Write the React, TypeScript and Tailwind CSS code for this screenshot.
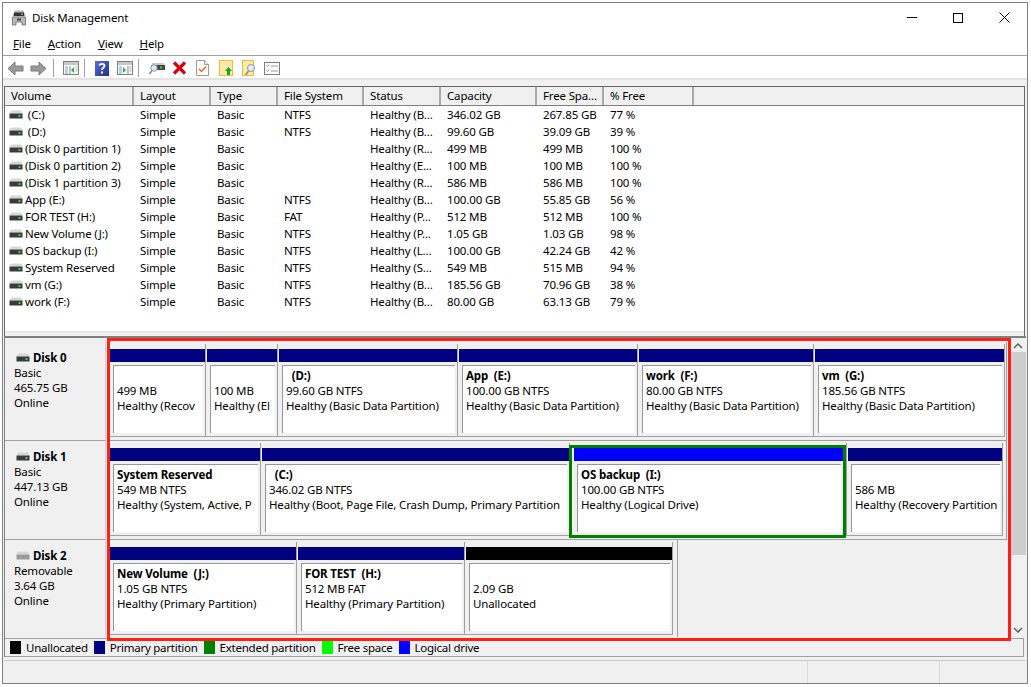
import React from "react";

const font = { fontFamily: '"Noto Sans", "Open Sans", sans-serif' };

const rows = [
  [" (C:)", "Simple", "Basic", "NTFS", "Healthy (B...", "346.02 GB", "267.85 GB", "77 %"],
  [" (D:)", "Simple", "Basic", "NTFS", "Healthy (B...", "99.60 GB", "39.09 GB", "39 %"],
  ["(Disk 0 partition 1)", "Simple", "Basic", "", "Healthy (R...", "499 MB", "499 MB", "100 %"],
  ["(Disk 0 partition 2)", "Simple", "Basic", "", "Healthy (E...", "100 MB", "100 MB", "100 %"],
  ["(Disk 1 partition 3)", "Simple", "Basic", "", "Healthy (R...", "586 MB", "586 MB", "100 %"],
  ["App (E:)", "Simple", "Basic", "NTFS", "Healthy (B...", "100.00 GB", "55.85 GB", "56 %"],
  ["FOR TEST (H:)", "Simple", "Basic", "FAT", "Healthy (P...", "512 MB", "512 MB", "100 %"],
  ["New Volume (J:)", "Simple", "Basic", "NTFS", "Healthy (P...", "1.05 GB", "1.03 GB", "98 %"],
  ["OS backup (I:)", "Simple", "Basic", "NTFS", "Healthy (L...", "100.00 GB", "42.24 GB", "42 %"],
  ["System Reserved", "Simple", "Basic", "NTFS", "Healthy (S...", "549 MB", "515 MB", "94 %"],
  ["vm (G:)", "Simple", "Basic", "NTFS", "Healthy (B...", "185.56 GB", "70.96 GB", "38 %"],
  ["work (F:)", "Simple", "Basic", "NTFS", "Healthy (B...", "80.00 GB", "63.13 GB", "79 %"],
];
const cols = [
  ["Volume", 129],
  ["Layout", 77],
  ["Type", 67],
  ["File System", 86],
  ["Status", 77],
  ["Capacity", 96],
  ["Free Spa...", 67],
  ["% Free", 90],
] as const;

type Part = { w: number; name?: string; l1: string; l2?: string; bar?: string; sel?: boolean };
const disks: { name: string; info: string[]; icon: string; w: number; h: number; parts: Part[] }[] = [
  {
    name: "Disk 0",
    info: ["Basic", "465.75 GB", "Online"],
    icon: "#3a3a3a",
    w: 899,
    h: 99,
    parts: [
      { w: 97, l1: "499 MB", l2: "Healthy (Recov" },
      { w: 72, l1: "100 MB", l2: "Healthy (El" },
      { w: 180, name: "\u00a0 (D:)", l1: "99.60 GB NTFS", l2: "Healthy (Basic Data Partition)" },
      { w: 180, name: "App  (E:)", l1: "100.00 GB NTFS", l2: "Healthy (Basic Data Partition)" },
      { w: 176, name: "work  (F:)", l1: "80.00 GB NTFS", l2: "Healthy (Basic Data Partition)" },
      { w: 191, name: "vm  (G:)", l1: "185.56 GB NTFS", l2: "Healthy (Basic Data Partition)" },
    ],
  },
  {
    name: "Disk 1",
    info: ["Basic", "447.13 GB", "Online"],
    icon: "#3a3a3a",
    w: 899,
    h: 99,
    parts: [
      { w: 152, name: "System Reserved", l1: "549 MB NTFS", l2: "Healthy (System, Active, P" },
      { w: 309, name: "\u00a0 (C:)", l1: "346.02 GB NTFS", l2: "Healthy (Boot, Page File, Crash Dump, Primary Partition" },
      { w: 277, name: "OS backup  (I:)", l1: "100.00 GB NTFS", l2: "Healthy (Logical Drive)", bar: "bg-[#0000ff]", sel: true },
      { w: 156, l1: "586 MB", l2: "Healthy (Recovery Partition" },
    ],
  },
  {
    name: "Disk 2",
    info: ["Removable", "3.64 GB", "Online"],
    icon: "#9a9a9a",
    w: 570,
    h: 97,
    parts: [
      { w: 188, name: "New Volume  (J:)", l1: "1.05 GB NTFS", l2: "Healthy (Primary Partition)" },
      { w: 168, name: "FOR TEST  (H:)", l1: "512 MB FAT", l2: "Healthy (Primary Partition)" },
      { w: 208, l1: "2.09 GB", l2: "Unallocated", bar: "bg-black" },
    ],
  },
];

const legend = [
  ["Unallocated", "bg-black"],
  ["Primary partition", "bg-[#000080]"],
  ["Extended partition", "bg-[#008000]"],
  ["Free space", "bg-[#00ff00]"],
  ["Logical drive", "bg-[#0000ff]"],
];

function DiskIcon({ color = "#3a3a3a", light = false }: { color?: string; light?: boolean }) {
  return (
    <svg width="14" height="9" viewBox="0 0 14 9" className="shrink-0">
      <path d="M2 0.5h10l1.5 3h-13z" fill="#d6d6d6" />
      <rect x="0.5" y="3.5" width="13" height="5" fill={color} />
      {!light && <rect x="9.5" y="5" width="2" height="2" fill="#35d24a" />}
    </svg>
  );
}

function TitleIcon() {
  return (
    <svg width="16" height="16" viewBox="0 0 16 16">
      <path d="M4 1h8l2 5H2z" fill="#c9c9c9" stroke="#777" strokeWidth="0.5" />
      <rect x="3" y="2.5" width="10" height="3.5" fill="#333" />
      <rect x="10" y="3.5" width="2" height="1.5" fill="#3fd24f" />
      <path d="M1.5 7h13v8h-3.5v-3h-6v3h-3.5z" fill="#b9b9b9" stroke="#6a6a6a" strokeWidth="0.8" />
      <rect x="6" y="8.5" width="4" height="2" fill="#444" />
    </svg>
  );
}

const ArrowL = () => (
  <svg width="17" height="15" viewBox="0 0 17 15">
    <path d="M8 1 1 7.5 8 14v-4h8V5H8z" fill="#9a9a9a" stroke="#7b7b7b" />
  </svg>
);
const ArrowR = () => (
  <svg width="17" height="15" viewBox="0 0 17 15">
    <path d="M9 1l7 6.5L9 14v-4H1V5h8z" fill="#9a9a9a" stroke="#7b7b7b" />
  </svg>
);
const PanelL = () => (
  <svg width="16" height="14" viewBox="0 0 16 14">
    <rect x="0.5" y="0.5" width="15" height="13" fill="#fff" stroke="#808080" />
    <rect x="1" y="1" width="14" height="3" fill="#c8c8c8" />
    <path d="M2 6h3M2 8h3M2 10h3M2 12h3" stroke="#7a9cc2" />
    <path d="M7 5v8" stroke="#888" />
    <path d="M11 6v6L8 9z" fill="#26b04a" />
    <path d="M12.5 6h2M12.5 8h2M12.5 10h2" stroke="#aaa" />
  </svg>
);
const PanelR = () => (
  <svg width="16" height="14" viewBox="0 0 16 14">
    <rect x="0.5" y="0.5" width="15" height="13" fill="#fff" stroke="#808080" />
    <rect x="1" y="1" width="14" height="3" fill="#c8c8c8" />
    <path d="M2 6h3M2 8h3M2 10h3M2 12h3" stroke="#7a9cc2" />
    <path d="M6 6v6l3-3z" fill="#26b04a" />
    <path d="M11 5v8" stroke="#888" />
    <path d="M12.5 6h2M12.5 8h2M12.5 10h2" stroke="#aaa" />
  </svg>
);
const HelpIcon = () => (
  <svg width="14" height="15" viewBox="0 0 14 15">
    <defs>
      <linearGradient id="hg" x1="0" y1="0" x2="1" y2="1">
        <stop offset="0" stopColor="#5a70d8" />
        <stop offset="1" stopColor="#1c2f8a" />
      </linearGradient>
    </defs>
    <rect width="14" height="15" fill="url(#hg)" />
    <path d="M4.5 4.5C4.5 2.5 9.5 2.3 9.5 4.8c0 2-2.5 2-2.5 4.2" fill="none" stroke="#fff" strokeWidth="1.8" />
    <rect x="6" y="10.5" width="2" height="2" fill="#fff" />
  </svg>
);
const DiskSearch = () => (
  <svg width="16" height="14" viewBox="0 0 16 14">
    <path d="M3 2h12l1 3H3z" fill="#c9c9c9" />
    <rect x="2" y="4" width="14" height="5" fill="#444" />
    <rect x="11" y="5.5" width="2" height="2" fill="#3fd24f" />
    <circle cx="5" cy="7" r="3.2" fill="#dfeaf2" stroke="#8a9aa8" />
    <path d="M3 9.5 0.5 13" stroke="#8d8d8d" strokeWidth="1.6" />
  </svg>
);
const XIcon = () => (
  <svg width="15" height="14" viewBox="0 0 15 14">
    <path d="M2 1.5 13 12.5M13 1.5 2 12.5" stroke="#d8000c" strokeWidth="3.2" />
  </svg>
);
const DocCheck = () => (
  <svg width="13" height="16" viewBox="0 0 13 16">
    <path d="M0.5 0.5h8l4 4v11h-12z" fill="#fff" stroke="#9a9a9a" />
    <path d="M8.5 0.5v4h4" fill="#eee" stroke="#9a9a9a" />
    <path d="M3 9l2.5 2.5L10 6.5" fill="none" stroke="#e9662c" strokeWidth="1.4" />
  </svg>
);
const FolderUp = () => (
  <svg width="14" height="16" viewBox="0 0 14 16">
    <rect x="0.5" y="0.5" width="13" height="15" fill="#fde8a6" stroke="#e6bf3e" />
    <path d="M9.5 7l3.5 4h-2v4H8v-4H6z" fill="#14a52b" />
  </svg>
);
const FolderFind = () => (
  <svg width="14" height="16" viewBox="0 0 14 16">
    <rect x="0.5" y="0.5" width="11" height="15" fill="#fde8a6" stroke="#e6bf3e" />
    <circle cx="9" cy="8" r="3.5" fill="#e2edf5" stroke="#8296a8" />
    <path d="M6.5 11 3.5 15" stroke="#8d8d8d" strokeWidth="1.6" />
  </svg>
);
const ListIcon = () => (
  <svg width="16" height="13" viewBox="0 0 16 13">
    <rect x="0.5" y="0.5" width="15" height="12" fill="#fff" stroke="#7d7d7d" />
    <path d="M2.5 3.5l1 1 1.5-2M2.5 8.5l1 1 1.5-2" fill="none" stroke="#5b93cf" />
    <path d="M7 4h7M7 9h7" stroke="#9a9a9a" />
  </svg>
);

function Tool({ children, gap = "" }: { children: React.ReactNode; gap?: string }) {
  return <div className={`w-[23px] h-[22px] flex items-center justify-center ${gap}`}>{children}</div>;
}
const Sep = ({ gap = "ml-[2px]" }: { gap?: string }) => <div className={`w-px h-[18px] bg-[#a0a0a0] ${gap}`} />;

function Partition({ p }: { p: Part }) {
  return (
    <div
      style={{ width: p.w }}
      className={`relative shrink-0 h-[93px] flex flex-col pt-[5px] border-r border-b border-[#a0a0a0] ${p.sel ? "pl-[4px]" : "pl-[1px]"}`}
    >
      <div className={`h-[13px] shrink-0 ${p.sel ? "mr-[3px]" : ""} ${p.bar ?? "bg-[#000080]"}`} />
      <div className={`mt-[3px] ml-[3px] h-[68px] bg-white border-l border-t border-[#969696] pl-[3px] pr-[3px] pt-[2px] overflow-hidden whitespace-nowrap leading-[15px] ${p.sel ? "mr-[5px]" : "mr-[2px]"}`}>
        <div className="h-[15px] font-bold whitespace-pre">{p.name ?? ""}</div>
        <div className="h-[15px]">{p.l1}</div>
        <div className="h-[15px] overflow-hidden">{p.l2}</div>
      </div>
      {p.sel && <div className="absolute -left-px right-0 top-[2px] h-[93px] border-[3px] border-[#008000]" />}
    </div>
  );
}

export default function App() {
  return (
    <div style={font} className="w-[1031px] h-[687px] bg-white pt-[2px] pl-[2px] text-[11.5px] tracking-[-0.15px] text-black overflow-hidden">
      <div className="w-[1026px] h-[682px] border border-[#808080] bg-[#f0f0f0] flex flex-col">
        {/* title bar */}
        <div className="h-[29px] shrink-0 bg-white flex items-center pl-[8px]">
          <TitleIcon />
          <span className="ml-[5px]">Disk Management</span>
          <div className="ml-auto flex items-center">
            <div className="w-[46px] flex justify-center">
              <div className="w-[10px] h-px bg-black" />
            </div>
            <div className="w-[46px] flex justify-center">
              <div className="w-[10px] h-[10px] border border-black" />
            </div>
            <div className="w-[46px] flex justify-center">
              <svg width="11" height="11" viewBox="0 0 11 11">
                <path d="M0.5 0.5l10 10M10.5 0.5l-10 10" stroke="#000" />
              </svg>
            </div>
          </div>
        </div>
        {/* menu */}
        <div className="h-[24px] shrink-0 bg-white border-b border-[#a0a0a0] flex items-center pl-[10px] gap-[17px]">
          <span><u>F</u>ile</span>
          <span><u>A</u>ction</span>
          <span><u>V</u>iew</span>
          <span><u>H</u>elp</span>
        </div>
        {/* toolbar */}
        <div className="h-[24px] pt-[2px] shrink-0 bg-white flex items-center pl-[1px] border-b-2 border-[#e3e3e3]">
          <Tool><ArrowL /></Tool>
          <Tool><ArrowR /></Tool>
          <Sep gap="ml-[3px]" />
          <Tool gap="ml-[5px]"><PanelL /></Tool>
          <Sep />
          <Tool gap="ml-[5px]"><HelpIcon /></Tool>
          <Tool><PanelR /></Tool>
          <Sep />
          <Tool gap="ml-[6px]"><DiskSearch /></Tool>
          <Tool><XIcon /></Tool>
          <Tool><DocCheck /></Tool>
          <Tool><FolderUp /></Tool>
          <Tool><FolderFind /></Tool>
          <Tool><ListIcon /></Tool>
        </div>
        <div className="flex-1 min-h-0 flex flex-col pt-[6px] px-[1px]">
          {/* list */}
          <div className="h-[250px] shrink-0 border-t border-l border-r border-[#696969] bg-white flex flex-col mr-[1px]">
            <div className="h-[19px] shrink-0 bg-[#f0f0f0] border-b border-[#808080] flex">
              {cols.map(([c, w]) => (
                <div key={c} style={{ width: w }} className="shrink-0 border-r-2 border-[#a9a9a9] pl-[6px] leading-[18px] whitespace-nowrap">
                  {c}
                </div>
              ))}
            </div>
            <div className="flex-1">
              {rows.map((r) => (
                <div key={r[0]} className="h-[17px] flex items-center whitespace-pre leading-[17px]">
                  {r.map((v, i) => (
                    <div key={i} style={{ width: cols[i][1] }} className={`shrink-0 overflow-hidden ${i === 0 ? "pl-[4px] flex items-center gap-[2px]" : "pl-[6px]"}`}>
                      {i === 0 && <DiskIcon />}
                      <span>{v}</span>
                    </div>
                  ))}
                </div>
              ))}
            </div>
            <div className="h-[5px] shrink-0 bg-[#f0f0f0] border-t border-[#e0e0e0]" />
          </div>
          {/* graphical pane */}
          <div className="h-[321px] shrink-0 border-t-2 border-[#808080] border-l relative flex flex-col">
            <div className="h-[300px] shrink-0 flex">
              <div className="flex-1 min-w-0 flex flex-col pt-[4px]">
                {disks.map((d, idx) => (
                  <div key={d.name} style={{ height: d.h }} className="shrink-0 flex">
                    <div className={`w-[101px] shrink-0 pt-[8px] pl-[9px] leading-[15px] border-r border-[#d0d0d0] ${idx < 2 ? "border-b border-b-[#a0a0a0]" : ""}`}>
                      <div className="flex items-center gap-[3px] pl-[2px] font-bold h-[15px]">
                        <DiskIcon color={d.icon} light={idx === 2} />
                        {d.name}
                      </div>
                      {d.info.map((t) => (
                        <div key={t}>{t}</div>
                      ))}
                    </div>
                    <div
                      style={{ width: d.w }}
                      className={`ml-[2px] shrink-0 flex items-start pt-[2px] pl-[1px] border-r border-[#a0a0a0] ${idx < 2 ? "border-b" : ""}`}
                    >
                      {d.parts.map((p, i) => (
                        <Partition key={i} p={p} />
                      ))}
                    </div>
                  </div>
                ))}
              </div>
              {/* scrollbar */}
              <div className="w-[16px] shrink-0 flex flex-col items-center pt-[5px]">
                <svg width="10" height="6" viewBox="0 0 10 6" className="shrink-0">
                  <path d="M1 5l4-4 4 4" fill="none" stroke="#606060" strokeWidth="1.5" />
                </svg>
                <div className="w-full h-[203px] shrink-0 mt-[3px] bg-[#cdcdcd]" />
                <svg width="10" height="6" viewBox="0 0 10 6" className="mt-[72px] shrink-0">
                  <path d="M1 1l4 4 4-4" fill="none" stroke="#606060" strokeWidth="1.5" />
                </svg>
              </div>
            </div>
            {/* legend */}
            <div className="h-[19px] shrink-0 mr-[2px] border-t border-b border-r border-[#a0a0a0] flex items-center pl-[5px] gap-[6px] whitespace-nowrap tracking-[-0.25px]">
              {legend.map(([t, c]) => (
                <div key={t} className="flex items-center gap-[5px]">
                  <div className={`w-[11px] h-[13px] ${c}`} />
                  <span>{t}</span>
                </div>
              ))}
            </div>
            {/* annotation */}
            <div className="absolute left-[102px] top-0 w-[904px] h-[303px] border-[3px] border-[#ff2015] pointer-events-none" />
          </div>
          {/* status bar */}
          <div className="flex-1 mt-[3px] border-t border-[#c8c8c8] flex justify-end">
            <div className="w-[132px] border-l border-[#d8d8d8]" />
            <div className="w-[87px] border-l border-[#d8d8d8]" />
          </div>
        </div>
      </div>
    </div>
  );
}
